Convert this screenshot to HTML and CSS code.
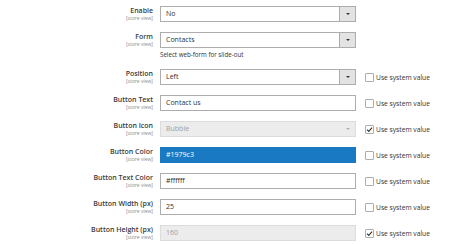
FILE: index.html
```html
<!DOCTYPE html>
<html>
<head>
<meta charset="utf-8">
<link rel="stylesheet" href="styles.css">
</head>
<body>
<div class="form">
  <div class="row">
    <div class="label"><span class="name">Enable</span><span class="scope">[store view]</span></div>
    <div class="control">
      <div class="field select"><span class="value">No</span><span class="arrow"><i></i></span></div>
    </div>
  </div>
  <div class="row">
    <div class="label"><span class="name">Form</span><span class="scope">[store view]</span></div>
    <div class="control">
      <div class="field select"><span class="value">Contacts</span><span class="arrow"><i></i></span></div>
      <div class="note">Select web-form for slide-out</div>
    </div>
  </div>
  <div class="row">
    <div class="label"><span class="name">Position</span><span class="scope">[store view]</span></div>
    <div class="control">
      <div class="field select"><span class="value">Left</span><span class="arrow"><i></i></span></div>
    </div>
    <label class="sys"><span class="box"></span>Use system value</label>
  </div>
  <div class="row">
    <div class="label"><span class="name">Button Text</span><span class="scope">[store view]</span></div>
    <div class="control">
      <div class="field"><span class="value">Contact us</span></div>
    </div>
    <label class="sys"><span class="box"></span>Use system value</label>
  </div>
  <div class="row">
    <div class="label"><span class="name">Button Icon</span><span class="scope">[store view]</span></div>
    <div class="control">
      <div class="field select disabled"><span class="value">Bubble</span><span class="arrow"><i></i></span></div>
    </div>
    <label class="sys"><span class="box checked"><svg viewBox="0 0 9 9" width="9" height="9"><polyline points="2,4.6 3.8,6.4 7,2.6" fill="none" stroke="#333" stroke-width="1.1"/></svg></span>Use system value</label>
  </div>
  <div class="row">
    <div class="label"><span class="name">Button Color</span><span class="scope">[store view]</span></div>
    <div class="control">
      <div class="field color"><span class="value">#1979c3</span></div>
    </div>
    <label class="sys"><span class="box"></span>Use system value</label>
  </div>
  <div class="row">
    <div class="label"><span class="name">Button Text Color</span><span class="scope">[store view]</span></div>
    <div class="control">
      <div class="field"><span class="value">#ffffff</span></div>
    </div>
    <label class="sys"><span class="box"></span>Use system value</label>
  </div>
  <div class="row">
    <div class="label"><span class="name">Button Width (px)</span><span class="scope">[store view]</span></div>
    <div class="control">
      <div class="field"><span class="value">25</span></div>
    </div>
    <label class="sys"><span class="box"></span>Use system value</label>
  </div>
  <div class="row">
    <div class="label"><span class="name">Button Height (px)</span><span class="scope">[store view]</span></div>
    <div class="control">
      <div class="field disabled"><span class="value">160</span></div>
    </div>
    <label class="sys"><span class="box checked"><svg viewBox="0 0 9 9" width="9" height="9"><polyline points="2,4.6 3.8,6.4 7,2.6" fill="none" stroke="#333" stroke-width="1.1"/></svg></span>Use system value</label>
  </div>
</div>
</body>
</html>
```
FILE: styles.css
```css
html, body {
  margin: 0;
  padding: 0;
  background: #ffffff;
}
body {
  font-family: "Open Sans", "DejaVu Sans", sans-serif;
  color: #303030;
  width: 474px;
  height: 244px;
  overflow: hidden;
}
.form {
  display: flex;
  flex-direction: column;
  gap: 10px;
  padding-top: 6px;
}
.row {
  display: flex;
  align-items: flex-start;
}
.label {
  width: 153px;
  display: flex;
  flex-direction: column;
  align-items: flex-end;
  padding-top: 1px;
}
.name {
  font-size: 7px;
  font-weight: 600;
  line-height: 8px;
  color: #3a3a3a;
}
.scope {
  font-size: 5px;
  line-height: 6px;
  color: #8a8a8a;
}
.control {
  margin-left: 7px;
  width: 196px;
  display: flex;
  flex-direction: column;
}
.field {
  box-sizing: border-box;
  height: 16px;
  border: 1px solid #adadad;
  background: #ffffff;
  display: flex;
  align-items: center;
  position: relative;
}
.value {
  flex: 1;
  padding-left: 5px;
  font-size: 7px;
  line-height: 14px;
  color: #303030;
}
.arrow {
  width: 15px;
  height: 14px;
  background: #e3e3e3;
  border-left: 1px solid #adadad;
  display: flex;
  align-items: center;
  justify-content: center;
}
.arrow i {
  width: 0;
  height: 0;
  border-left: 2px solid transparent;
  border-right: 2px solid transparent;
  border-top: 2px solid #333;
}
.field.disabled {
  background: #ececec;
  border-color: #dcdcdc;
}
.field.disabled .value {
  color: #a0a0a0;
}
.field.disabled .arrow {
  background: #ececec;
  border-left-color: #ececec;
}
.field.disabled .arrow i {
  border-top-color: #b0b0b0;
}
.field.color {
  background: #1979c3;
  border-color: #1979c3;
}
.field.color .value {
  color: #ffffff;
}
.note {
  margin-top: 2px;
  font-size: 6.2px;
  line-height: 9px;
  color: #303030;
}
.sys {
  margin-left: 9px;
  height: 16px;
  display: flex;
  align-items: center;
  font-size: 6.7px;
  color: #303030;
}
.box {
  box-sizing: border-box;
  width: 9px;
  height: 9px;
  border: 1px solid #adadad;
  background: #ffffff;
  margin-right: 2px;
  display: flex;
  align-items: center;
  justify-content: center;
  border-radius: 1px;
}
.box svg {
  display: block;
  flex: none;
}
```
